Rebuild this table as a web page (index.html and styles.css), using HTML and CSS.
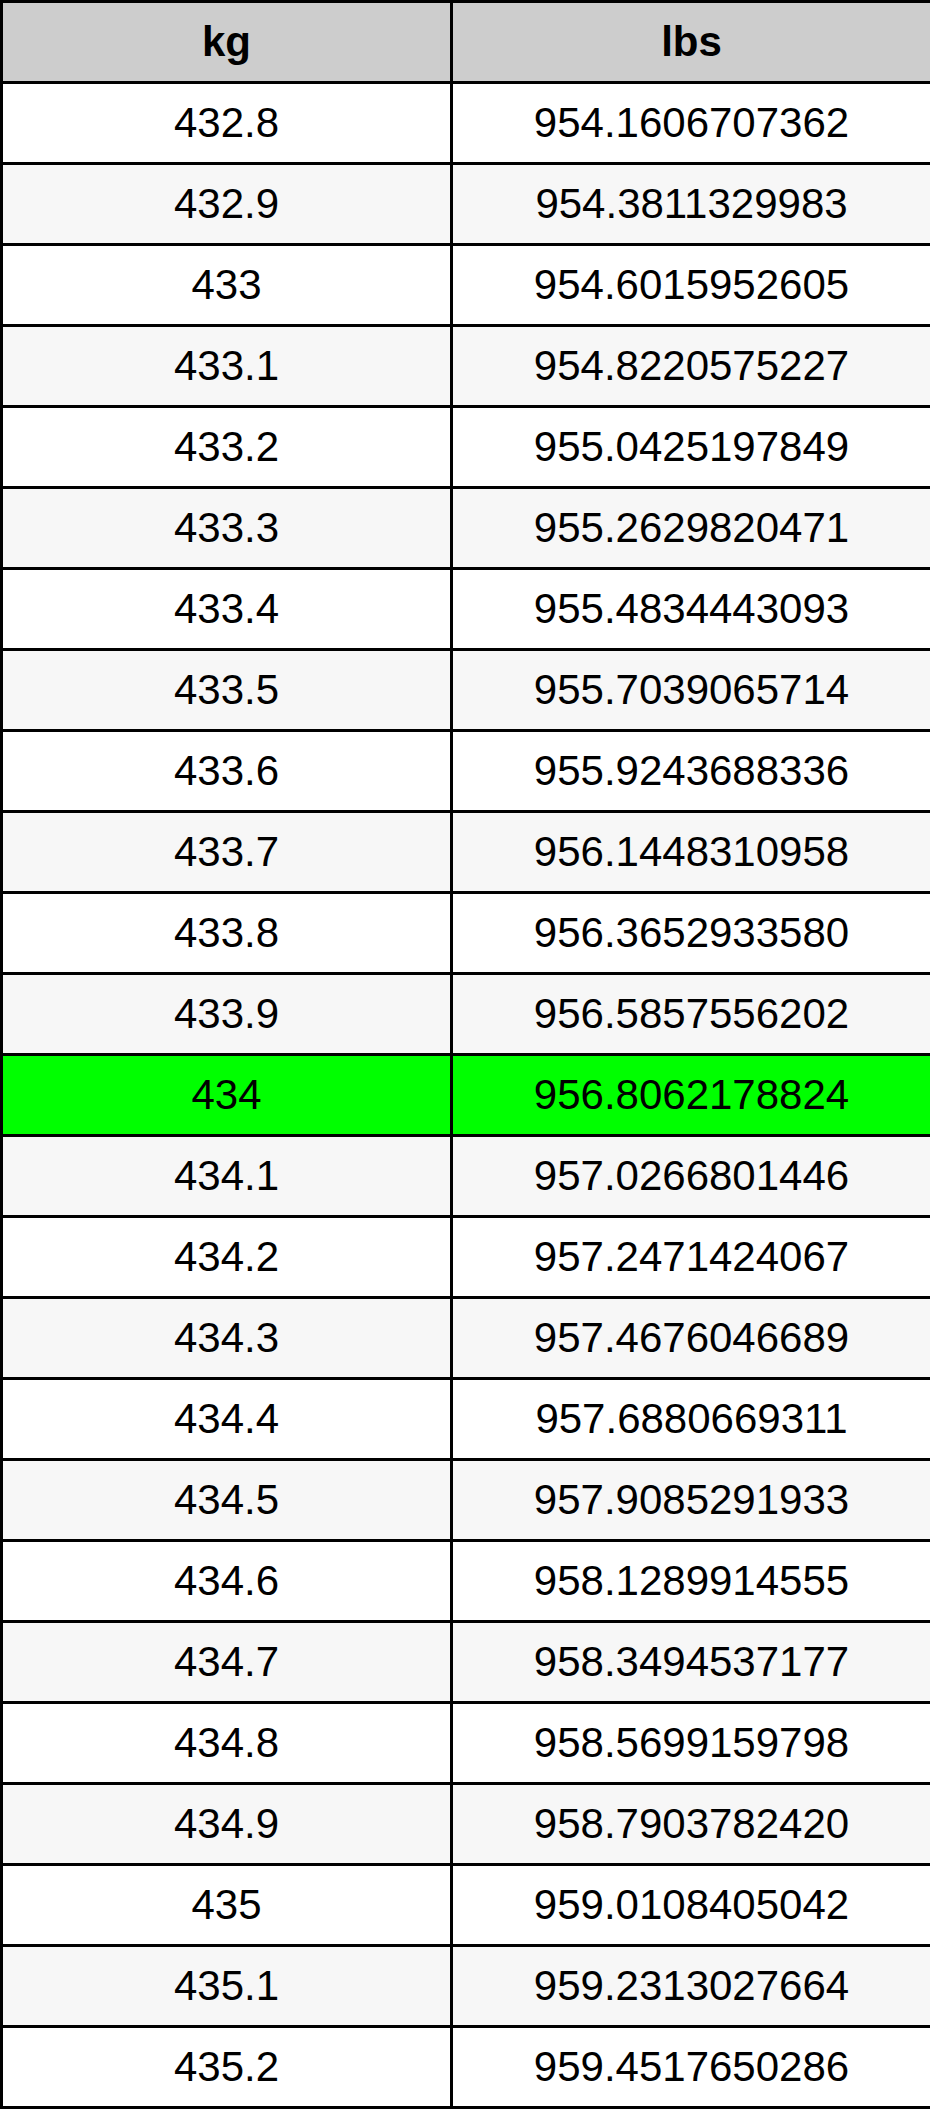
FILE: index.html
```html
<!DOCTYPE html>
<html>
<head>
<meta charset="utf-8">
<link rel="stylesheet" href="styles.css">
</head>
<body>
<table class="conv">
<colgroup><col class="c1"><col class="c2"></colgroup>
<thead><tr><th>kg</th><th>lbs</th></tr></thead>
<tbody>
<tr><td>432.8</td><td>954.1606707362</td></tr>
<tr><td>432.9</td><td>954.3811329983</td></tr>
<tr><td>433</td><td>954.6015952605</td></tr>
<tr><td>433.1</td><td>954.8220575227</td></tr>
<tr><td>433.2</td><td>955.0425197849</td></tr>
<tr><td>433.3</td><td>955.2629820471</td></tr>
<tr><td>433.4</td><td>955.4834443093</td></tr>
<tr><td>433.5</td><td>955.7039065714</td></tr>
<tr><td>433.6</td><td>955.9243688336</td></tr>
<tr><td>433.7</td><td>956.1448310958</td></tr>
<tr><td>433.8</td><td>956.3652933580</td></tr>
<tr><td>433.9</td><td>956.5857556202</td></tr>
<tr class="hl"><td>434</td><td>956.8062178824</td></tr>
<tr><td>434.1</td><td>957.0266801446</td></tr>
<tr><td>434.2</td><td>957.2471424067</td></tr>
<tr><td>434.3</td><td>957.4676046689</td></tr>
<tr><td>434.4</td><td>957.6880669311</td></tr>
<tr><td>434.5</td><td>957.9085291933</td></tr>
<tr><td>434.6</td><td>958.1289914555</td></tr>
<tr><td>434.7</td><td>958.3494537177</td></tr>
<tr><td>434.8</td><td>958.5699159798</td></tr>
<tr><td>434.9</td><td>958.7903782420</td></tr>
<tr><td>435</td><td>959.0108405042</td></tr>
<tr><td>435.1</td><td>959.2313027664</td></tr>
<tr><td>435.2</td><td>959.4517650286</td></tr>
</tbody>
</table>
</body>
</html>
```
FILE: styles.css
```css
html, body {
  margin: 0;
  padding: 0;
  background: #fff;
}
.conv {
  width: 930px;
  border-collapse: collapse;
  table-layout: fixed;
  font-family: "Liberation Sans", Arial, sans-serif;
  font-size: 42px;
  color: #000;
}
.c1 { width: 450px; }
.c2 { width: 480px; }
.conv th, .conv td {
  border: 3px solid #000;
  height: 78px;
  padding: 0;
  text-align: center;
  vertical-align: middle;
  line-height: 1;
}
.conv th {
  background: #cdcdcd;
  font-weight: bold;
}
.conv tbody tr:nth-child(even) td {
  background: #f7f7f7;
}
.conv tbody tr.hl td {
  background: #00ff00;
}
```
